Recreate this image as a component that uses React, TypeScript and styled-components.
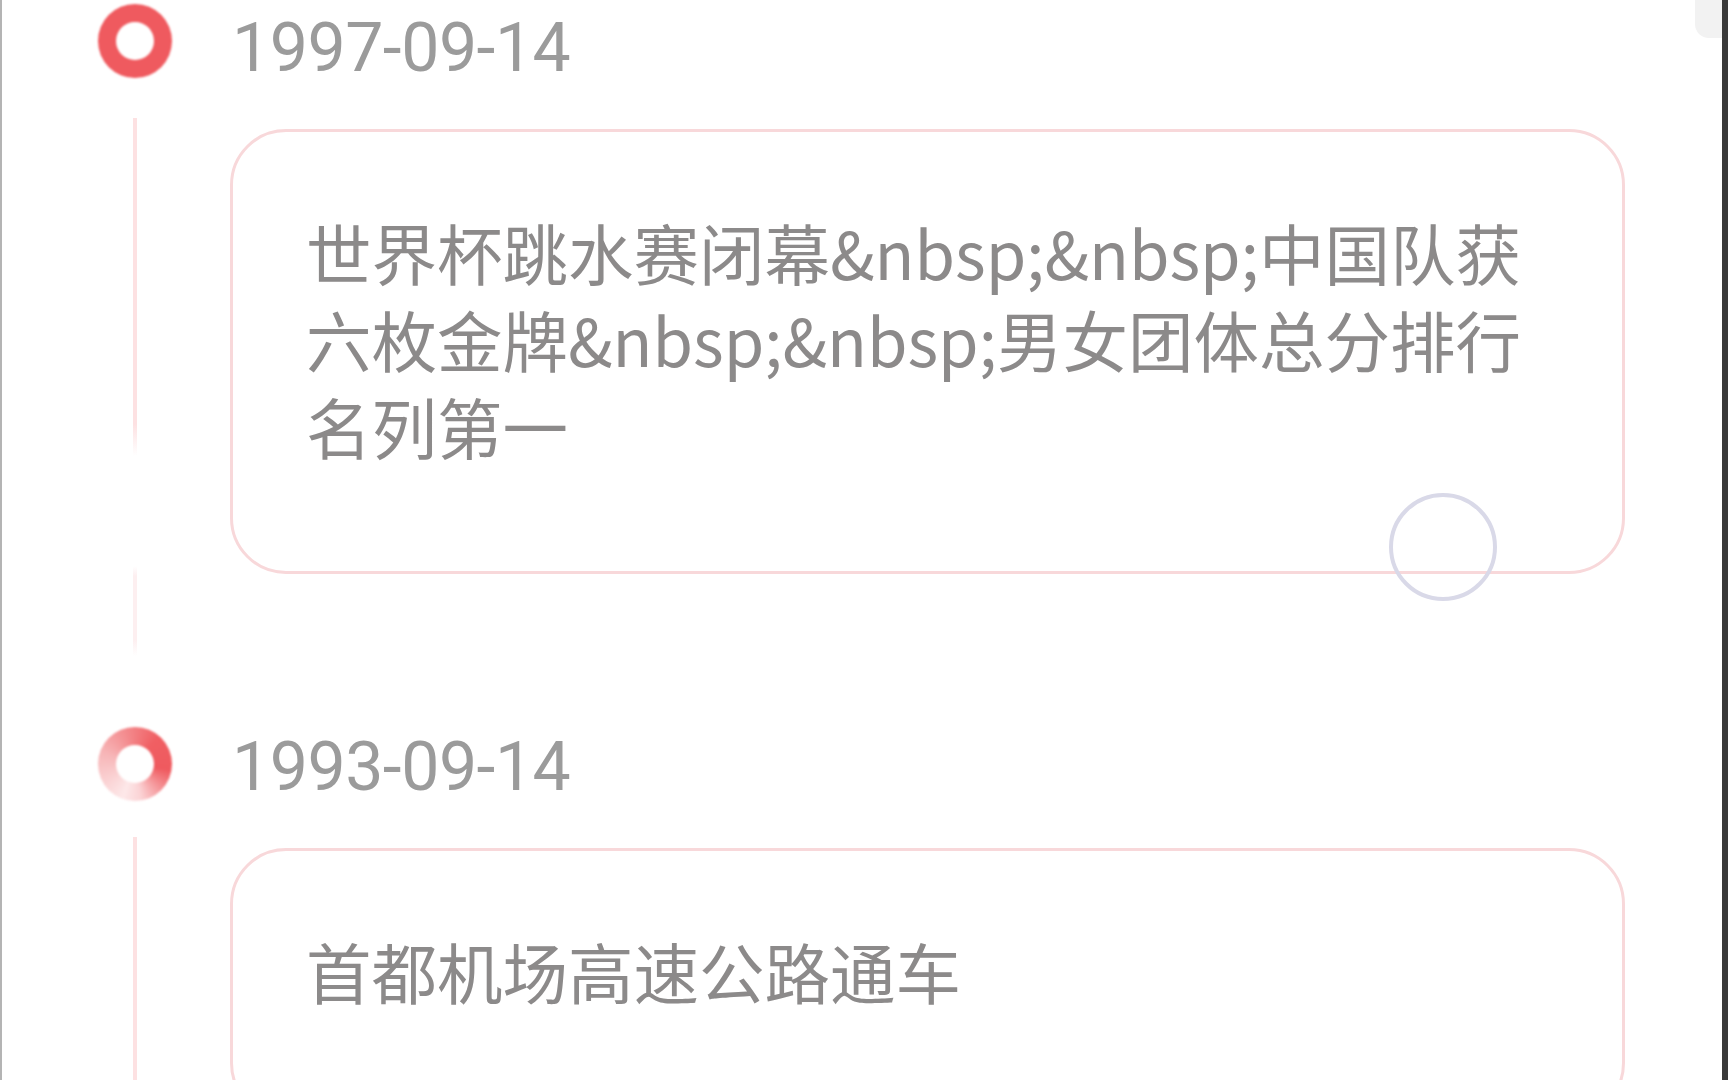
import styled, { createGlobalStyle } from "styled-components"

const GlobalStyle = createGlobalStyle`
  html, body {
    margin: 0;
    padding: 0;
    background: #ffffff;
  }
  * {
    box-sizing: border-box;
  }
`

const Screen = styled.div`
  /* phone screen with a thin frame on the left and a dark edge on the right */
  position: relative;
  height: 100vh;
  overflow: hidden;
  background: #ffffff;
  border-left: 2px solid #b4b4b4;
  border-right: 6px solid #3a3a3a;
`

const ScrollThumb = styled.div`
  position: absolute;
  top: -12px;
  right: 0;
  width: 27px;
  height: 50px;
  border-radius: 0 0 0 14px;
  background: #f2f2f2;
`

const Timeline = styled.div`
  display: flex;
  flex-direction: column;
  padding-right: 97px;
`

const Item = styled.div`
  display: grid;
  grid-template-columns: 230px 1fr;
`

const Rail = styled.div`
  display: flex;
  align-items: flex-start;
  padding-left: 96px;
`

const Marker = styled.div<{ $faded?: boolean }>`
  position: relative;
  width: 74px;
  height: 74px;
  margin-top: ${(p) => (p.$faded ? "8px" : "4px")};
  border-radius: 50%;
  background: ${(p) =>
    p.$faded
      ? "conic-gradient(from 200deg, #fde8e9 0deg, #f7b5b7 90deg, #f05f63 200deg, #ef5a5f 260deg, #fbd3d5 330deg, #fde8e9 360deg)"
      : "#ef5a5f"};
  filter: blur(1px);

  &::after {
    content: "";
    position: absolute;
    left: 18px;
    top: 18px;
    width: 38px;
    height: 38px;
    border-radius: 50%;
    background: #ffffff;
  }
`

const DateLabel = styled.div`
  font-family: Roboto, "Liberation Sans", sans-serif;
  font-size: 68px;
  line-height: 96px;
  height: 96px;
  color: #9b9b9b;
  letter-spacing: -0.5px;
`

const Line = styled.div`
  /* the connector between two markers, patchy as in the recording */
  width: 4px;
  margin-left: 131px;
  align-self: stretch;
  background: linear-gradient(
    to bottom,
    transparent 0px,
    transparent 22px,
    #fde1e2 22px,
    #fde1e2 328px,
    transparent 360px,
    transparent 470px,
    #fdeff0 480px,
    #fdeff0 544px,
    transparent 560px
  );
`

const Body = styled.div`
  padding-top: 33px;
  padding-bottom: 145px;
`

const Card = styled.div`
  position: relative;
  margin-left: -2px;
  border: 3px solid #f8d8da;
  border-radius: 56px;
  padding: 76px 75px 102px 73px;
  background: #ffffff;
`

const CardText = styled.p`
  margin: 0;
  font-family: "Noto Sans CJK SC", "Noto Sans", sans-serif;
  font-size: 65.5px;
  line-height: 87px;
  color: #8c8a8a;
  word-break: break-all;
`

const TouchRing = styled.div`
  /* tap indicator from the screen recording */
  position: absolute;
  left: 1156px;
  top: 361px;
  width: 108px;
  height: 108px;
  border-radius: 50%;
  border: 4px solid #d9d9e8;
`

type Event = {
  date: string
  text: string
  faded?: boolean
  touch?: boolean
}

const events: Event[] = [
  {
    date: "1997-09-14",
    text: "世界杯跳水赛闭幕&nbsp;&nbsp;中国队获六枚金牌&nbsp;&nbsp;男女团体总分排行名列第一",
    touch: true,
  },
  {
    date: "1993-09-14",
    text: "首都机场高速公路通车",
    faded: true,
  },
]

const App = () => {
  return (
    <>
      <GlobalStyle />
      <Screen>
        <ScrollThumb />
        <Timeline>
          {events.map((ev) => (
            <Item key={ev.date}>
              <Rail>
                <Marker $faded={ev.faded} />
              </Rail>
              <DateLabel>{ev.date}</DateLabel>
              <Line />
              <Body>
                <Card>
                  <CardText>{ev.text}</CardText>
                  {ev.touch && <TouchRing />}
                </Card>
              </Body>
            </Item>
          ))}
        </Timeline>
      </Screen>
    </>
  )
}

export default App
